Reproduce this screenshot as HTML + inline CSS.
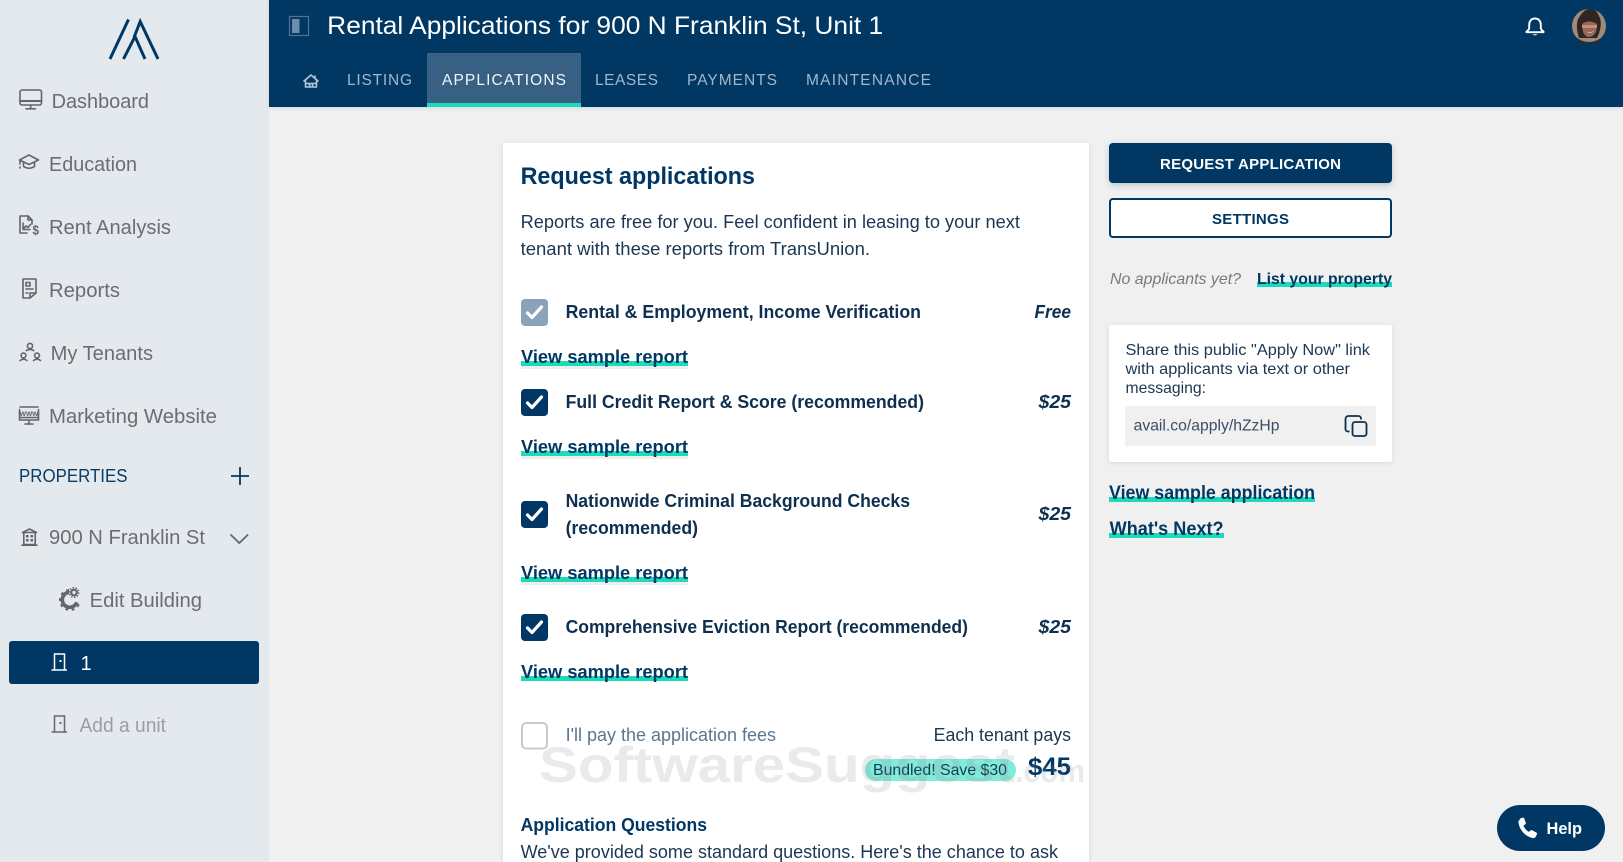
<!DOCTYPE html>
<html lang="en">
<head>
<meta charset="utf-8">
<title>Rental Applications</title>
<style>
html,body{margin:0;padding:0;width:1623px;height:862px;overflow:hidden;background:#f0f0f0}
svg{display:block;position:absolute;left:0;top:0}
text{font-family:"Liberation Sans",sans-serif;white-space:pre}
.side{font-size:20px;fill:#6a6d71}
.tab{font-size:15.5px;fill:#a3b6c8}
.body{font-size:18px;fill:#1c3653}
.lab{font-size:18px;font-weight:700;fill:#0e2f50}
.lnk{font-size:18px;font-weight:700;fill:#003764}
.price{font-size:18px;font-weight:700;font-style:italic;fill:#0e2f50}
.sm{font-size:16px;fill:#1c3653}
.ic{fill:none;stroke:#626569;stroke-width:1.6;stroke-linejoin:round;stroke-linecap:round}
.chk{fill:none;stroke:#fff;stroke-width:3.2;stroke-linecap:round;stroke-linejoin:round}
</style>
</head>
<body>
<svg width="1623" height="862" viewBox="0 0 1623 862" xmlns="http://www.w3.org/2000/svg">
<defs>
<filter id="sh" x="-5%" y="-5%" width="110%" height="115%"><feDropShadow dx="0" dy="1" stdDeviation="2" flood-color="#000" flood-opacity=".10"/></filter>
<filter id="sh2" x="-10%" y="-30%" width="120%" height="170%"><feDropShadow dx="0" dy="2" stdDeviation="3" flood-color="#003764" flood-opacity=".25"/></filter>
</defs>

<!-- sidebar -->
<rect x="0" y="0" width="269" height="862" fill="#e4e9ee"/>
<g fill="none" stroke="#003764" stroke-width="3">
<path d="M110 59 128.500 19.500"/>
<path d="M123.500 59 135 36.500 145 59"/>
<path d="M134 37.500 140.200 21.500 158 59"/>
</g>

<g class="ic">
<rect x="20" y="90" width="21.500" height="15" rx="2"/>
<path d="M20 101h21.500" stroke-width="2"/>
<path d="M30.700 105v3.500M26 108.800h9.500"/>
</g>
<text class="side" x="51.600" y="108" textLength="97.400" lengthAdjust="spacingAndGlyphs">Dashboard</text>

<g class="ic">
<path d="M19.500 160 29 155l9.500 5-9.500 4.500z"/>
<path d="M23.500 162.500v4q5.500 3.500 11 0v-4"/>
<path d="M20 161v3M20 167v1"/>
</g>
<text class="side" x="49" y="171" textLength="88" lengthAdjust="spacingAndGlyphs">Education</text>

<g class="ic">
<path d="M27 233h-7v-17h8l4 4v4"/>
<path d="M28 216v4h4"/>
<path d="M23 223v6.500h7M24 228l2-2 2 1.500 2.500-3"/>
</g>
<text x="32.500" y="234.500" style="font-size:13px;font-weight:700" fill="#626569" textLength="6.500" lengthAdjust="spacingAndGlyphs">$</text>
<text class="side" x="49" y="234" textLength="122" lengthAdjust="spacingAndGlyphs">Rent Analysis</text>

<g class="ic">
<path d="M30 298h-7v-19h13v14z"/>
<path d="M36 293h-6v5"/>
<path d="M26 282.500h4v3.500h-4zM26 289h7M26 293h2"/>
</g>
<text class="side" x="49" y="297" textLength="71" lengthAdjust="spacingAndGlyphs">Reports</text>

<g class="ic" stroke-width="1.900">
<circle cx="30" cy="346" r="2.600"/>
<path d="M26.300 350.500q3.700-2 7.400 0"/>
<circle cx="23.500" cy="355.500" r="2.400"/>
<path d="M20 360.500q3.500-2.600 7 0"/>
<circle cx="37" cy="355.500" r="2.400"/>
<path d="M33.500 360.500q3.500-2.600 7 0"/>
</g>
<text class="side" x="50.600" y="360" textLength="102.400" lengthAdjust="spacingAndGlyphs">My Tenants</text>

<g class="ic">
<path d="M20 407h18M19.500 409.500v10.500h19v-10.500"/>
<path d="M20 417.500h18" stroke-width="1.400"/>
<path d="M29 420v3.500M25 424h8"/>
</g>
<text x="19.800" y="416" style="font-size:8px;font-weight:700" fill="#626569" textLength="18.500" lengthAdjust="spacingAndGlyphs">www</text>
<text class="side" x="49" y="423" textLength="168" lengthAdjust="spacingAndGlyphs">Marketing Website</text>

<text x="19" y="482" style="font-size:18px" fill="#0a3a66" textLength="108.500" lengthAdjust="spacingAndGlyphs">PROPERTIES</text>
<path d="M231 476h18M240 467v18" stroke="#003764" stroke-width="1.800" fill="none"/>

<g class="ic" stroke-width="1.500">
<path d="M22.500 532.500 29.500 529l7 3.500z"/>
<path d="M23.800 533v11.500h11.400V533"/>
<path d="M22 545.200h15"/>
</g>
<g fill="#626569"><rect x="26" y="535" width="2.500" height="2.500"/><rect x="30.500" y="535" width="2.500" height="2.500"/><rect x="26" y="539" width="2.500" height="2.500"/><rect x="30.500" y="539" width="2.500" height="2.500"/></g>
<text class="side" x="49" y="544" textLength="156" lengthAdjust="spacingAndGlyphs">900 N Franklin St</text>
<path d="M230.500 534.500l8.800 8.500 8.800-8.500" fill="none" stroke="#5c6d7c" stroke-width="1.900"/>

<path d="M69 592.300a7.500 7.500 0 1 0 7.800 10" fill="none" stroke="#626569" stroke-width="3.600"/>
<path d="M69 590a10 10 0 1 0 10.500 13" fill="none" stroke="#626569" stroke-width="2" stroke-dasharray="2.800 3.600"/>
<circle cx="74" cy="592.500" r="2.800" fill="none" stroke="#626569" stroke-width="2.200"/>
<circle cx="74" cy="592.500" r="4.800" fill="none" stroke="#626569" stroke-width="1.400" stroke-dasharray="1.500 1.500"/>
<text class="side" x="89.600" y="607" textLength="112.400" lengthAdjust="spacingAndGlyphs">Edit Building</text>

<rect x="9" y="641" width="250" height="43" rx="3" fill="#003764"/>
<g fill="none" stroke="#fff" stroke-width="1.500">
<path d="M54.500 669.500V654h10v15.500"/>
<path d="M51.500 670h15.500"/>
</g>
<rect x="59.500" y="660" width="2" height="2" fill="#fff"/>
<text x="80.500" y="670" style="font-size:20px" fill="#fff">1</text>

<g fill="none" stroke="#65686c" stroke-width="1.500">
<path d="M54.500 731.500V716h10v15.500"/>
<path d="M51.500 732h15.500"/>
</g>
<rect x="59.500" y="722" width="2" height="2" fill="#65686c"/>
<text x="79.500" y="732" style="font-size:20px" fill="#9a9ea3" textLength="86.500" lengthAdjust="spacingAndGlyphs">Add a unit</text>

<!-- header -->
<rect x="269" y="0" width="1354" height="107" fill="#003764" filter="url(#sh)"/>
<rect x="289.500" y="16.500" width="19" height="19" fill="none" stroke="#4f7292" stroke-width="1.200"/>
<rect x="292" y="19" width="7.500" height="14" fill="#6d8dab"/>
<text x="327.200" y="34" style="font-size:25px" fill="#fff" textLength="556" lengthAdjust="spacingAndGlyphs">Rental Applications for 900 N Franklin St, Unit 1</text>

<g fill="none" stroke="#b6c5d3" stroke-width="1.600" stroke-linejoin="round">
<path d="M303.500 81.500 311 75l7.500 6.500"/>
<path d="M305.500 80.500v6.500h11v-6.500"/>
<path d="M305.500 83.500h11"/>
<path d="M309.500 87v-3M312.500 87v-3"/>
<path d="M315 75.500v3"/>
</g>
<text class="tab" x="347" y="85" textLength="65" lengthAdjust="spacing">LISTING</text>
<rect x="427" y="53" width="154" height="54" fill="#386083"/>
<rect x="427" y="103" width="154" height="4" fill="#1bdbb9"/>
<text class="tab" x="442" y="85" textLength="124" lengthAdjust="spacing" style="fill:#f3f6f8">APPLICATIONS</text>
<text class="tab" x="595" y="85" textLength="63" lengthAdjust="spacing">LEASES</text>
<text class="tab" x="687" y="85" textLength="90" lengthAdjust="spacing">PAYMENTS</text>
<text class="tab" x="806" y="85" textLength="125" lengthAdjust="spacing">MAINTENANCE</text>

<!-- bell -->
<path d="M1535 18.500c-3.600 0-5.800 2.600-5.800 6.200v3.300c0 1.600-1 2.400-2.700 3.500v.7h17v-.7c-1.700-1.100-2.700-1.900-2.700-3.500v-3.300c0-3.600-2.200-6.200-5.800-6.200z" fill="none" stroke="#fff" stroke-width="1.900" stroke-linejoin="round"/>
<path d="M1532.500 34.200q2.500 2.400 5 0z" fill="#fff"/>
<!-- avatar -->
<circle cx="1589" cy="26" r="17" fill="#a08b78"/>
<path d="M1579 38c-3-10-3-17 1-22 2-3 5-7 10-7 7 0 8 5 10 9 2 6 0 14-3 20z" fill="#2f2623"/>
<path d="M1582 24q7-5 15 0l-1 8q-3 5-7 5t-6-5z" fill="#96695a"/>
<path d="M1582 25h15v3h-15z" fill="#c98c7c"/>
<path d="M1585 31q4 2.500 9 0-4 3.500-9 0z" fill="#eee"/>
<path d="M1577 38q12 8 24 0l-3 5h-18z" fill="#2f2a2c"/>

<!-- main card -->
<rect x="503" y="143" width="586" height="740" rx="2" fill="#fff" filter="url(#sh)"/>
<text x="520.600" y="184" style="font-size:24px;font-weight:700" fill="#003764" textLength="234.400" lengthAdjust="spacingAndGlyphs">Request applications</text>
<text class="body" x="520.600" y="228" textLength="499.400" lengthAdjust="spacingAndGlyphs">Reports are free for you. Feel confident in leasing to your next</text>
<text class="body" x="520.600" y="255" textLength="349.400" lengthAdjust="spacingAndGlyphs">tenant with these reports from TransUnion.</text>

<rect x="521" y="299" width="27" height="27" rx="4" fill="#8aa3ba"/>
<path class="chk" d="M527.500 313l4.500 4.500 9.500-10.500"/>
<text class="lab" x="565.600" y="318" textLength="355.400" lengthAdjust="spacingAndGlyphs">Rental &amp; Employment, Income Verification</text>
<text class="price" x="1034.500" y="318" textLength="36.500" lengthAdjust="spacingAndGlyphs">Free</text>
<rect x="521" y="361" width="167" height="8" fill="#eeeeee"/><rect x="521" y="361" width="167" height="5" fill="#1bdbb9"/>
<text class="lnk" x="521" y="363" textLength="167" lengthAdjust="spacingAndGlyphs">View sample report</text>

<rect x="521" y="389" width="27" height="27" rx="4" fill="#003764"/>
<path class="chk" d="M527.500 403l4.500 4.500 9.500-10.500"/>
<text class="lab" x="565.600" y="408" textLength="358.400" lengthAdjust="spacingAndGlyphs">Full Credit Report &amp; Score (recommended)</text>
<text class="price" x="1038.500" y="408" textLength="32.500" lengthAdjust="spacingAndGlyphs">$25</text>
<rect x="521" y="451" width="167" height="8" fill="#eeeeee"/><rect x="521" y="451" width="167" height="5" fill="#1bdbb9"/>
<text class="lnk" x="521" y="453" textLength="167" lengthAdjust="spacingAndGlyphs">View sample report</text>

<rect x="521" y="501" width="27" height="27" rx="4" fill="#003764"/>
<path class="chk" d="M527.500 515l4.500 4.500 9.500-10.500"/>
<text class="lab" x="565.600" y="507" textLength="344.400" lengthAdjust="spacingAndGlyphs">Nationwide Criminal Background Checks</text>
<text class="lab" x="565.600" y="534" textLength="132.400" lengthAdjust="spacingAndGlyphs">(recommended)</text>
<text class="price" x="1038.500" y="520" textLength="32.500" lengthAdjust="spacingAndGlyphs">$25</text>
<rect x="521" y="577" width="167" height="8" fill="#eeeeee"/><rect x="521" y="577" width="167" height="5" fill="#1bdbb9"/>
<text class="lnk" x="521" y="579" textLength="167" lengthAdjust="spacingAndGlyphs">View sample report</text>

<rect x="521" y="614" width="27" height="27" rx="4" fill="#003764"/>
<path class="chk" d="M527.500 628l4.500 4.500 9.500-10.500"/>
<text class="lab" x="565.600" y="633" textLength="402.400" lengthAdjust="spacingAndGlyphs">Comprehensive Eviction Report (recommended)</text>
<text class="price" x="1038.500" y="633" textLength="32.500" lengthAdjust="spacingAndGlyphs">$25</text>
<rect x="521" y="676" width="167" height="5" fill="#1bdbb9"/>
<text class="lnk" x="521" y="678" textLength="167" lengthAdjust="spacingAndGlyphs">View sample report</text>

<rect x="522" y="723" width="25" height="25.500" rx="4" fill="#fff" stroke="#c9c9c9" stroke-width="2"/>
<text class="body" x="565.600" y="741" style="fill:#5d7690" textLength="210.400" lengthAdjust="spacingAndGlyphs">I'll pay the application fees</text>
<text class="body" x="933.600" y="741" textLength="137.400" lengthAdjust="spacingAndGlyphs">Each tenant pays</text>

<rect x="865" y="759" width="151" height="22" rx="11" fill="#1bdbb9" fill-opacity=".55"/>
<text class="sm" x="873" y="775" textLength="134" lengthAdjust="spacingAndGlyphs" style="fill:#0e3a55">Bundled! Save $30</text>
<text x="1028" y="775" style="font-size:25px;font-weight:700" fill="#003764" textLength="43" lengthAdjust="spacingAndGlyphs">$45</text>

<text x="539" y="782" style="font-size:50px;font-weight:700" fill="#8a8f94" fill-opacity=".19" textLength="476" lengthAdjust="spacingAndGlyphs">SoftwareSuggest</text>
<text x="1015" y="782" style="font-size:32px;font-weight:700" fill="#8a8f94" fill-opacity=".19" textLength="70" lengthAdjust="spacingAndGlyphs">.com</text>

<text class="lnk" x="520.600" y="831" textLength="186.400" lengthAdjust="spacingAndGlyphs">Application Questions</text>
<text class="body" x="520.600" y="858" textLength="537.400" lengthAdjust="spacingAndGlyphs">We've provided some standard questions. Here's the chance to ask</text>

<!-- right column -->
<rect x="1109" y="143" width="283" height="40" rx="4" fill="#003764" filter="url(#sh2)"/>
<text x="1160" y="169" style="font-size:15px;font-weight:700" fill="#fff" textLength="181" lengthAdjust="spacing">REQUEST APPLICATION</text>
<rect x="1110" y="199" width="281" height="38" rx="3" fill="#fff" stroke="#003764" stroke-width="2"/>
<text x="1212" y="224" style="font-size:15px;font-weight:700" fill="#003764" textLength="77" lengthAdjust="spacing">SETTINGS</text>

<text x="1110" y="284" style="font-size:16px;font-style:italic" fill="#7a7a7a" textLength="131" lengthAdjust="spacingAndGlyphs">No applicants yet?</text>
<rect x="1257" y="282" width="135" height="5" fill="#1bdbb9"/>
<text x="1257" y="284" style="font-size:16px;font-weight:700" fill="#003764" textLength="135" lengthAdjust="spacingAndGlyphs">List your property</text>

<rect x="1109" y="325" width="283" height="137" rx="2" fill="#fff" filter="url(#sh)"/>
<text class="sm" x="1125.500" y="355" textLength="244.500" lengthAdjust="spacingAndGlyphs">Share this public "Apply Now" link</text>
<text class="sm" x="1125.500" y="374" textLength="224.500" lengthAdjust="spacingAndGlyphs">with applicants via text or other</text>
<text class="sm" x="1125.500" y="393" textLength="80.500" lengthAdjust="spacingAndGlyphs">messaging:</text>
<rect x="1125" y="406" width="251" height="40" fill="#f0f0f0"/>
<text x="1133.600" y="430.300" style="font-size:16px" fill="#3a4f63" textLength="145.900" lengthAdjust="spacingAndGlyphs">avail.co/apply/hZzHp</text>
<g fill="none" stroke="#0e2f50" stroke-width="1.800">
<rect x="1352.500" y="422" width="14" height="14" rx="2.500"/>
<path d="M1349.500 431.500h-1.500a2.500 2.500 0 0 1-2.500-2.500v-10a3 3 0 0 1 3-3h10a2.500 2.500 0 0 1 2.500 2.500v1"/>
</g>

<rect x="1109" y="497" width="206" height="5" fill="#1bdbb9"/>
<text x="1109" y="499" style="font-size:19px;font-weight:700" fill="#003764" textLength="206" lengthAdjust="spacingAndGlyphs">View sample application</text>
<rect x="1109" y="533" width="115" height="5" fill="#1bdbb9"/>
<text x="1109.600" y="535" style="font-size:19px;font-weight:700" fill="#003764" textLength="114" lengthAdjust="spacingAndGlyphs">What's Next?</text>

<!-- help -->
<rect x="1497" y="805" width="108" height="46" rx="23" fill="#003764"/>
<path transform="translate(1518.500 817.500) scale(1.130) translate(-1520.300 -817.300)" d="M1521.500 818.300l2.800-1 .9.500 1.700 4.400-.4 1-1.800 1.300c.9 2.400 2.600 4.300 4.900 5.500l1.600-1.400 1-.1 4.200 2.300.4.900-1.300 2.600c-.5.900-1.500 1.400-2.500 1.200-6.800-1.500-11.700-7-12.700-13.700-.2-1.100.3-2.100 1.200-2.500z" fill="#fff"/>
<text x="1546.500" y="833.800" style="font-size:16.500px;font-weight:700" fill="#fff" textLength="35.500" lengthAdjust="spacingAndGlyphs">Help</text>
</svg>
</body>
</html>
